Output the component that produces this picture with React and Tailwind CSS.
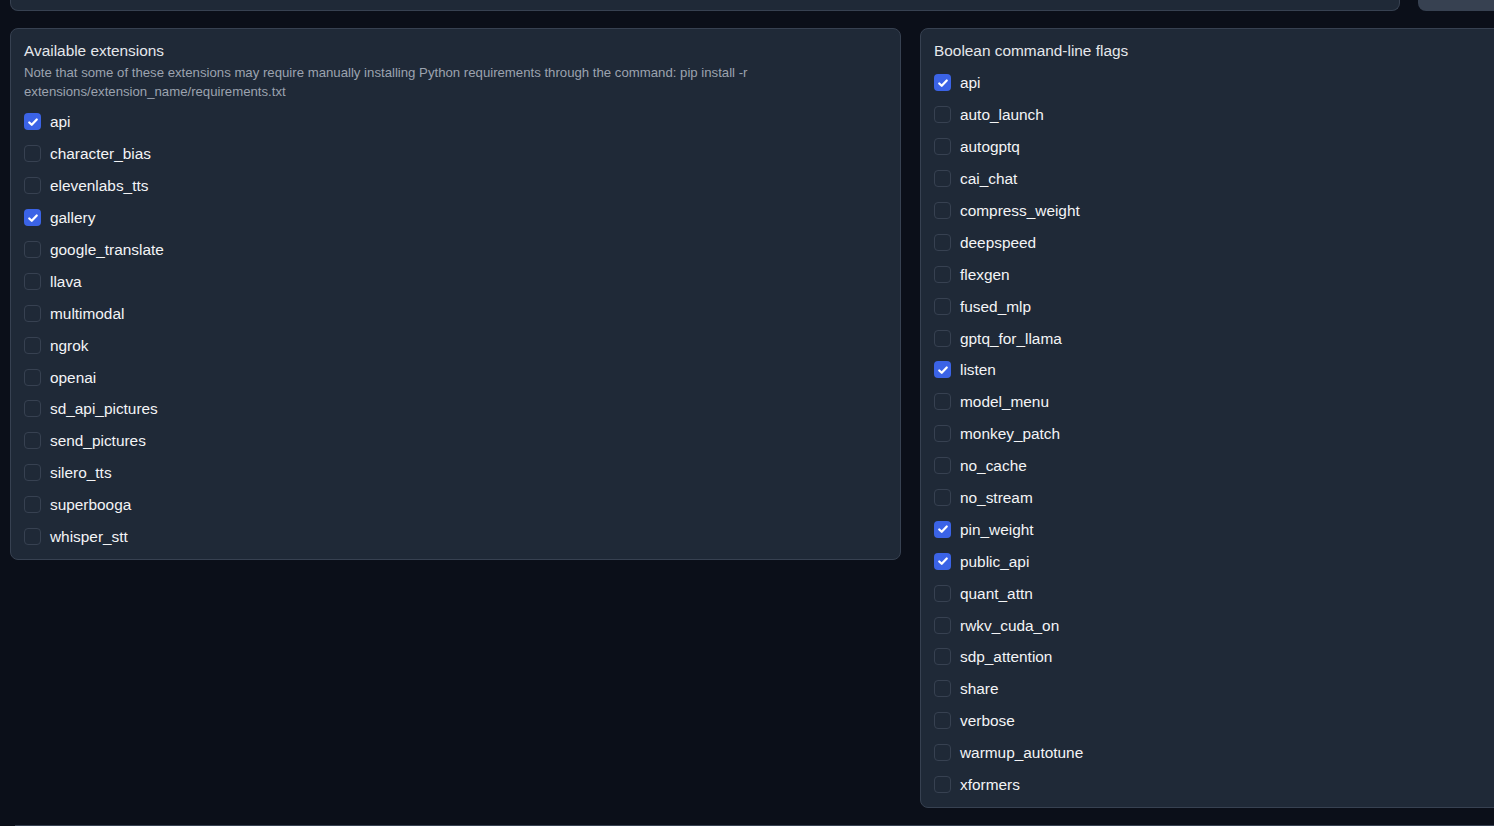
import React from 'react';

const extensions = [
  { name: 'api', on: true },
  { name: 'character_bias' },
  { name: 'elevenlabs_tts' },
  { name: 'gallery', on: true },
  { name: 'google_translate' },
  { name: 'llava' },
  { name: 'multimodal' },
  { name: 'ngrok' },
  { name: 'openai' },
  { name: 'sd_api_pictures' },
  { name: 'send_pictures' },
  { name: 'silero_tts' },
  { name: 'superbooga' },
  { name: 'whisper_stt' },
];

const flags = [
  { name: 'api', on: true },
  { name: 'auto_launch' },
  { name: 'autogptq' },
  { name: 'cai_chat' },
  { name: 'compress_weight' },
  { name: 'deepspeed' },
  { name: 'flexgen' },
  { name: 'fused_mlp' },
  { name: 'gptq_for_llama' },
  { name: 'listen', on: true },
  { name: 'model_menu' },
  { name: 'monkey_patch' },
  { name: 'no_cache' },
  { name: 'no_stream' },
  { name: 'pin_weight', on: true },
  { name: 'public_api', on: true },
  { name: 'quant_attn' },
  { name: 'rwkv_cuda_on' },
  { name: 'sdp_attention' },
  { name: 'share' },
  { name: 'verbose' },
  { name: 'warmup_autotune' },
  { name: 'xformers' },
];

const Check = ({ on }) => (
  <span
    className={
      on
        ? 'flex h-[17px] w-[17px] shrink-0 items-center justify-center rounded-[4px] bg-[#3b63e6]'
        : 'flex h-[17px] w-[17px] shrink-0 items-center justify-center rounded-[4px] border border-[#374151] bg-[#1f2937]'
    }
  >
    {on && (
      <svg width="12" height="12" viewBox="0 0 16 16" fill="none">
        <path d="M3 8.6l3.3 3.1L13 4.6" stroke="white" strokeWidth="3" strokeLinecap="round" strokeLinejoin="round" />
      </svg>
    )}
  </span>
);

const Item = ({ name, on }) => (
  <label className="flex h-[31.9px] items-center gap-[9px]">
    <Check on={on} />
    <span className="text-[15.4px] text-[#f3f4f6]">{name}</span>
  </label>
);

export default function App() {
  return (
    <div
      className="h-[826px] w-[1494px] overflow-hidden bg-[#0b0f19]"
      style={{ fontFamily: '"Liberation Sans", Arial, sans-serif' }}
    >
      {/* bits of the row above */}
      <div className="flex h-[11px] gap-[18px] pl-[10px]">
        <div className="h-[11px] w-[1390px] shrink-0 rounded-b-[8px] border border-t-0 border-[#374151] bg-[#1f2937]" />
        <div className="h-[11px] w-[100px] shrink-0 rounded-b-[8px] bg-[#374151]" />
      </div>

      <div className="mt-[17px] flex items-start gap-[19px] px-[10px]">
        {/* Available extensions */}
        <div className="w-[891px] shrink-0 rounded-[8px] border border-[#374151] bg-[#1f2937] px-[13px] pt-[12px] pb-[7px]">
          <div className="text-[15.4px] leading-[20px] text-[#e5e7eb]">Available extensions</div>
          <p className="mt-[2px] text-[13.2px] leading-[19px] text-[#9ca3af]">
            Note that some of these extensions may require manually installing Python requirements through the command: pip install -r
            <br />
            extensions/extension_name/requirements.txt
          </p>
          <div className="mt-[5px] flex flex-col">
            {extensions.map((e) => (
              <Item key={e.name} {...e} />
            ))}
          </div>
        </div>

        {/* Boolean flags */}
        <div className="w-[891px] shrink-0 rounded-[8px] border border-[#374151] bg-[#1f2937] px-[13px] pt-[12px] pb-[7px]">
          <div className="text-[15.4px] leading-[20px] text-[#e5e7eb]">Boolean command-line flags</div>
          <div className="mt-[6px] flex flex-col">
            {flags.map((f) => (
              <Item key={f.name} {...f} />
            ))}
          </div>
        </div>
      </div>

      <div className="ml-[15px] mt-[17px] h-[20px] border-t border-[#374151]" />
    </div>
  );
}
